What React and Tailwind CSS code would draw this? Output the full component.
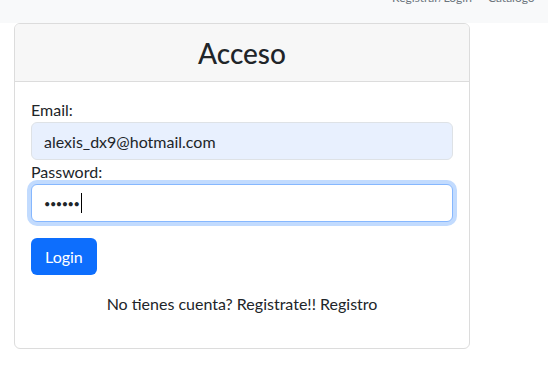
import React from 'react';

const App = () => {
  return (
    <div className="w-[548px] h-[387px] bg-white text-[#212529] font-['Lato',sans-serif] overflow-hidden">
      {/* Navbar (cut at top) */}
      <nav className="h-[23px] bg-[#f8f9fa] overflow-hidden flex">
        <div className="flex gap-[16px] -mt-[10px] text-[12px] leading-[16px] text-[#6c757d] whitespace-nowrap">
          <span className="ml-[392px]">Registrar/Login</span>
          <span>Catalogo</span>
        </div>
      </nav>

      <div className="ml-[14px] w-[456px] border border-[#dcdcdc] rounded-[6px] overflow-hidden">
        <div className="h-[58px] bg-[#f7f7f7] border-b border-[#dcdcdc] flex items-center justify-center">
          <h3 className="text-[28px] font-medium leading-none">Acceso</h3>
        </div>
        <div className="px-[16px] pt-[16px] pb-[32px]">
          <form className="flex flex-col">
            <label className="text-[16px] leading-[24px]">Email:</label>
            <input
              className="h-[38px] px-[12px] rounded-[6px] border border-[#dee2e6] bg-[#e8f0fe] text-[16px] outline-none"
              defaultValue="alexis_dx9@hotmail.com"
            />
            <label className="text-[16px] leading-[24px]">Password:</label>
            <div className="h-[38px] px-[12px] rounded-[6px] border border-[#86b7fe] ring-4 ring-[#c2dbfe] bg-white flex items-center">
              <span className="text-[11px] tracking-[-0.5px] leading-none">••••••</span>
              <span className="ml-[2px] w-px h-[20px] bg-black" />
            </div>
            <div className="mt-[16px]">
              <button type="button" className="h-[37px] px-[14px] rounded-[6px] bg-[#0d6efd] text-white text-[16px]">
                Login
              </button>
            </div>
          </form>
          <p className="mt-[17px] text-center text-[16px] leading-[24px]">
            No tienes cuenta? Registrate!! Registro
          </p>
        </div>
      </div>
    </div>
  );
};

export default App;
